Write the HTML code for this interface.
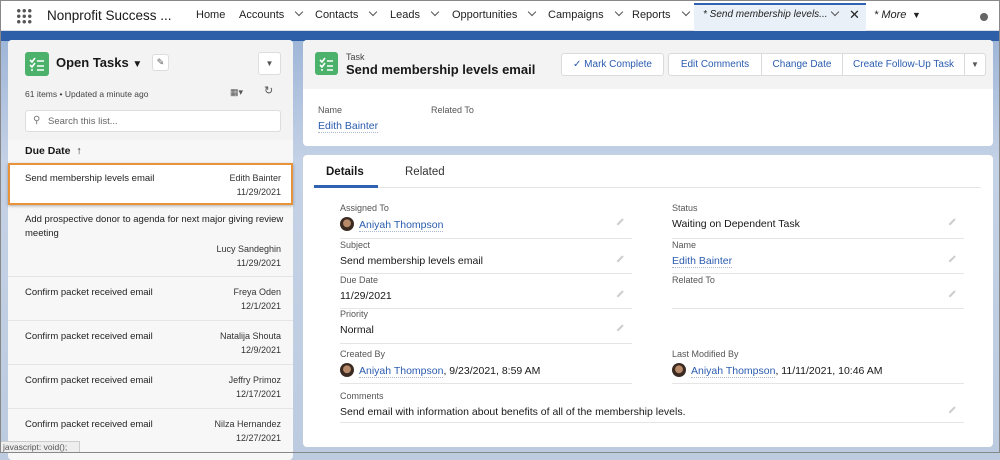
<!DOCTYPE html>
<html><head><meta charset="utf-8"><style>
*{box-sizing:border-box;margin:0;padding:0}
body{width:1000px;height:453px;overflow:hidden;font-family:"Liberation Sans",sans-serif;background:#bccbe0;position:relative;color:#181818}
.a{position:absolute}
.nav{left:0;top:0;width:1000px;height:31px;background:#fff;border-bottom:1px solid #d8dde6}
.nav span{position:absolute;top:9px;font-size:11px;color:#222}
.chev{display:inline-block;width:6px;height:6px;border-right:1.2px solid #555;border-bottom:1.2px solid #555;transform:rotate(45deg);margin-left:12px;position:relative;top:-3px}
.banner{left:0;top:31px;width:1000px;height:10px;background:#2c5fa8}
.bg2{left:0;top:41px;width:1000px;height:412px;background:linear-gradient(#9fb6d8,#c5d2e6 30%,#bccbe0)}
.panel{background:#fff;border-radius:4px}
.lbl{font-size:9px;color:#555}
.val{font-size:10.5px;color:#181818}
.lnk{color:#2a5cae;border-bottom:1px dotted #aab8d0}
.fld{position:absolute;border-bottom:1px solid #e5e5e5}
.pen{position:absolute;right:8px;top:18px;width:8px;height:1.5px;background:#ccc;transform:rotate(-45deg)}
.btn{position:absolute;top:13px;height:23px;background:#fff;border:1px solid #dddbda;font-size:10px;color:#2a5cae;text-align:center;line-height:22px}
.row{position:absolute;left:8px;width:285px;border-bottom:1px solid #e5e5e5;font-size:9.5px;color:#222}
.row .t{position:absolute;left:17px;top:8px;width:190px;line-height:15px}
.row .n{position:absolute;right:12px;top:8px;text-align:right;line-height:14px;font-size:9px;color:#333}
.av{display:inline-block;width:14px;height:14px;border-radius:50%;background:radial-gradient(circle at 50% 45%,#b88a6a 35%,#3a2a22 40%);vertical-align:-3px;margin-right:5px}
.icon{background:#4bb16b;border-radius:3px}
</style></head><body>
<div class="a nav">
 <div class="a" style="left:16px;top:8px;width:16px;height:16px;background:radial-gradient(circle,#555 1.5px,transparent 2px) 0 0/5.5px 5.5px"></div>
 <span style="left:47px;top:8px;font-size:13.5px;color:#181818">Nonprofit Success ...</span>
 <span style="left:196px">Home</span>
 <span style="left:239px">Accounts<i class="chev"></i></span>
 <span style="left:315px">Contacts<i class="chev"></i></span>
 <span style="left:390px">Leads<i class="chev"></i></span>
 <span style="left:452px">Opportunities<i class="chev"></i></span>
 <span style="left:548px">Campaigns<i class="chev"></i></span>
 <span style="left:632px">Reports<i class="chev"></i></span>
 <div class="a" style="left:694px;top:3px;width:172px;height:28px;background:#eaf0f8;border-top:2px solid #2f62b0"></div>
 <span style="left:703px;font-style:italic;font-size:10px">* Send membership levels...</span>
 <span style="left:832px"><i class="chev" style="margin-left:0"></i></span>
 <span style="left:849px;font-size:13px;top:7px">✕</span>
 <span style="left:874px;font-style:italic">* More</span>
 <span style="left:912px;font-size:9px;top:10px">▼</span>
 <div class="a" style="left:980px;top:13px;width:8px;height:8px;border-radius:50%;background:#666"></div>
</div>
<div class="a banner"></div>
<div class="a bg2"></div>

<div class="a panel" style="left:8px;top:40px;width:285px;height:420px;background:#f7f7f7;overflow:hidden">
 <div class="a" style="left:0;top:0;width:285px;height:100px;background:#f3f3f3"></div>
 <div class="a icon" style="left:17px;top:12px;width:24px;height:24px"><svg width="24" height="24"><g stroke="#fff" stroke-width="1.6" fill="none"><path d="M5 8l2 2 3-4M5 13l2 2 3-4"/><path d="M12 9h7M12 14h7M12 18h7M6 18h2"/></g></svg></div>
 <div class="a" style="left:48px;top:15px;font-size:13px;font-weight:bold">Open Tasks <span style="font-size:10px">▼</span></div>
 <div class="a" style="left:144px;top:14px;width:17px;height:17px;border:1px solid #ddd;background:#fff;border-radius:3px;font-size:9px;text-align:center;line-height:15px;color:#555">✎</div>
 <div class="a" style="left:250px;top:12px;width:23px;height:23px;border:1px solid #ddd;background:#fff;border-radius:3px;font-size:8px;text-align:center;line-height:21px;color:#555">▼</div>
 <div class="a" style="left:17px;top:49px;font-size:8.5px;color:#444">61 items • Updated a minute ago</div>
 <div class="a" style="left:222px;top:47px;font-size:9px;color:#555">▦▾</div>
 <div class="a" style="left:256px;top:44px;font-size:11px;color:#555">↻</div>
 <div class="a" style="left:17px;top:70px;width:256px;height:22px;background:#fff;border:1px solid #ddd;border-radius:3px;font-size:9.5px;color:#666;padding:5px 0 0 22px">Search this list...<span class="a" style="left:7px;top:4px;font-size:10px;color:#777">⚲</span></div>
 <div class="a" style="left:17px;top:105px;font-size:10.5px;font-weight:bold">Due Date &nbsp;<span style="font-weight:normal">↑</span></div>
</div>
<div class="row" style="top:163px;height:42px;background:#fff;border:2px solid #e8923a;box-shadow:0 1px 3px rgba(0,0,0,.3)"><div class="t" style="left:15px;top:6px">Send membership levels email</div><div class="n" style="right:10px;top:6px">Edith Bainter<br>11/29/2021</div></div>
<div class="row" style="top:205px;height:72px"><div class="t" style="width:260px;line-height:14px">Add prospective donor to agenda for next major giving review meeting</div><div class="n" style="top:37px">Lucy Sandeghin<br>11/29/2021</div></div>
<div class="row" style="top:277px;height:44px"><div class="t">Confirm packet received email</div><div class="n">Freya Oden<br>12/1/2021</div></div>
<div class="row" style="top:321px;height:44px"><div class="t">Confirm packet received email</div><div class="n">Natalija Shouta<br>12/9/2021</div></div>
<div class="row" style="top:365px;height:44px"><div class="t">Confirm packet received email</div><div class="n">Jeffry Primoz<br>12/17/2021</div></div>
<div class="row" style="top:409px;height:44px;border:none"><div class="t">Confirm packet received email</div><div class="n">Nilza Hernandez<br>12/27/2021</div></div>
<div class="a" style="left:0;top:441px;width:80px;height:12px;background:#eee;border:1px solid #ccc;font-size:8.5px;color:#555;padding-left:2px">javascript: void();</div>

<div class="a panel" style="left:303px;top:40px;width:690px;height:106px;overflow:hidden">
 <div class="a" style="left:0;top:0;width:690px;height:49px;background:#f3f3f3"></div>
 <div class="a icon" style="left:12px;top:12px;width:23px;height:23px"><svg width="23" height="23"><g stroke="#fff" stroke-width="1.6" fill="none"><path d="M5 8l2 2 3-4M5 13l2 2 3-4"/><path d="M12 9h6M12 14h6M12 18h6M6 18h2"/></g></svg></div>
 <div class="a" style="left:43px;top:12px;font-size:9px;color:#444">Task</div>
 <div class="a" style="left:43px;top:22px;font-size:13px;font-weight:bold">Send membership levels email</div>
 <div class="btn" style="left:258px;width:103px;border-radius:3px">✓ Mark Complete</div>
 <div class="btn" style="left:365px;width:94px;border-radius:3px 0 0 3px">Edit Comments</div>
 <div class="btn" style="left:458px;width:82px">Change Date</div>
 <div class="btn" style="left:539px;width:123px">Create Follow-Up Task</div>
 <div class="btn" style="left:661px;width:22px;border-radius:0 3px 3px 0;color:#555;font-size:8px">▼</div>
 <div class="a lbl" style="left:15px;top:65px">Name</div>
 <div class="a lbl" style="left:128px;top:65px">Related To</div>
 <div class="a val lnk" style="left:15px;top:80px">Edith Bainter</div>
</div>

<div class="a panel" style="left:303px;top:155px;width:690px;height:292px">
 <div class="a" style="left:10px;top:32px;width:668px;height:1px;background:#e5e5e5"></div>
 <div class="a" style="left:23px;top:11px;font-size:11.5px;font-weight:bold">Details</div>
 <div class="a" style="left:11px;top:30px;width:64px;height:3px;background:#2f62b0"></div>
 <div class="a" style="left:102px;top:11px;font-size:11.5px;color:#333">Related</div>

 <div class="fld" style="left:37px;top:48px;width:292px;height:36px"><div class="lbl">Assigned To</div><div class="val" style="margin-top:4px"><i class="av"></i><span class="lnk">Aniyah Thompson</span></div><i class="pen"></i></div>
 <div class="fld" style="left:37px;top:85px;width:292px;height:34px"><div class="lbl">Subject</div><div class="val" style="margin-top:5px">Send membership levels email</div><i class="pen"></i></div>
 <div class="fld" style="left:37px;top:120px;width:292px;height:34px"><div class="lbl">Due Date</div><div class="val" style="margin-top:5px">11/29/2021</div><i class="pen"></i></div>
 <div class="fld" style="left:37px;top:154px;width:292px;height:35px"><div class="lbl">Priority</div><div class="val" style="margin-top:5px">Normal</div><i class="pen"></i></div>
 <div class="fld" style="left:37px;top:194px;width:292px;height:35px"><div class="lbl">Created By</div><div class="val" style="margin-top:4px"><i class="av"></i><span class="lnk">Aniyah Thompson</span>, 9/23/2021, 8:59 AM</div></div>
 <div class="fld" style="left:37px;top:236px;width:624px;height:32px"><div class="lbl">Comments</div><div class="val" style="margin-top:5px">Send email with information about benefits of all of the membership levels.</div><i class="pen"></i></div>

 <div class="fld" style="left:369px;top:48px;width:292px;height:36px"><div class="lbl">Status</div><div class="val" style="margin-top:5px">Waiting on Dependent Task</div><i class="pen"></i></div>
 <div class="fld" style="left:369px;top:85px;width:292px;height:34px"><div class="lbl">Name</div><div class="val" style="margin-top:5px"><span class="lnk">Edith Bainter</span></div><i class="pen"></i></div>
 <div class="fld" style="left:369px;top:120px;width:292px;height:34px"><div class="lbl">Related To</div><i class="pen"></i></div>
 <div class="fld" style="left:369px;top:194px;width:292px;height:35px"><div class="lbl">Last Modified By</div><div class="val" style="margin-top:4px"><i class="av"></i><span class="lnk">Aniyah Thompson</span>, 11/11/2021, 10:46 AM</div></div>
</div>
<div class="a" style="left:0;top:0;width:1000px;height:453px;border:1px solid #888;pointer-events:none"></div>
</body></html>
